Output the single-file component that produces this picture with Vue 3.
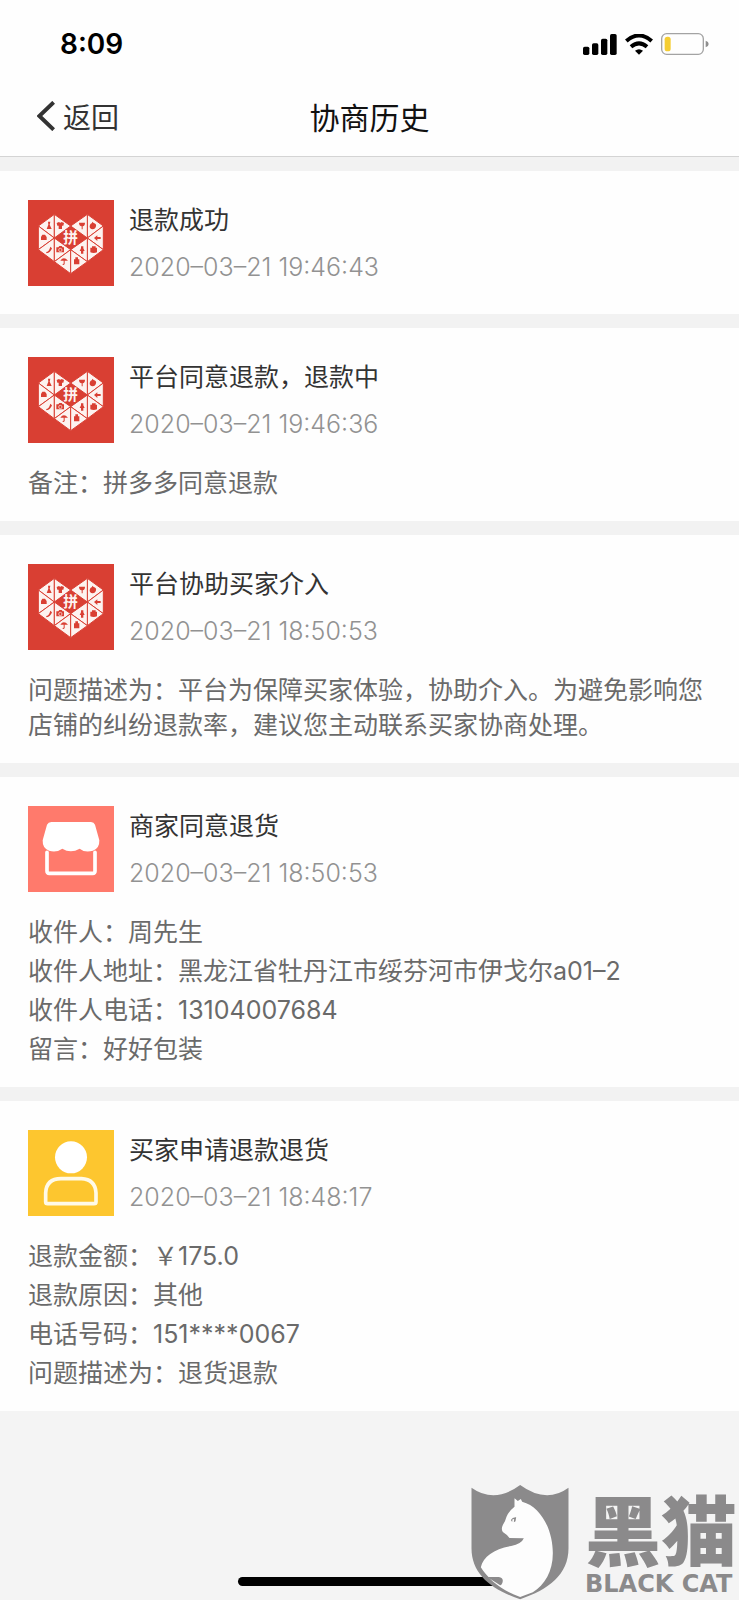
<script setup>
import { ref } from 'vue';

const records = ref([
  {
    id: 1,
    type: 'platform',
    title: '退款成功',
    time: '2020–03–21 19:46:43',
    details: []
  },
  {
    id: 2,
    type: 'platform',
    title: '平台同意退款，退款中',
    time: '2020–03–21 19:46:36',
    details: ['备注：拼多多同意退款']
  },
  {
    id: 3,
    type: 'platform',
    title: '平台协助买家介入',
    time: '2020–03–21 18:50:53',
    details: [
      '问题描述为：平台为保障买家体验，协助介入。为避免影响您店铺的纠纷退款率，建议您主动联系买家协商处理。'
    ]
  },
  {
    id: 4,
    type: 'seller',
    title: '商家同意退货',
    time: '2020–03–21 18:50:53',
    details: [
      '收件人：周先生',
      '收件人地址：黑龙江省牡丹江市绥芬河市伊戈尔a01–2',
      '收件人电话：13104007684',
      '留言：好好包装'
    ]
  },
  {
    id: 5,
    type: 'buyer',
    title: '买家申请退款退货',
    time: '2020–03–21 18:48:17',
    details: [
      '退款金额：￥175.0',
      '退款原因：其他',
      '电话号码：151****0067',
      '问题描述为：退货退款'
    ]
  }
]);

// white triangles that make up the heart
const triangles = [
  '56,107 104,72 104,143',
  '104,72 153,107 104,143',
  '56,107 104,143 56,178',
  '56,178 104,143 104,214',
  '104,143 153,178 104,214',
  '104,214 153,178 153,250',
  '251,107 203,72 203,143',
  '203,72 153,107 203,143',
  '251,107 203,143 251,178',
  '251,178 203,143 203,214',
  '203,143 153,178 203,214',
  '203,214 153,178 153,250'
];
</script>

<template>
  <div class="page">
    <header>
      <div class="status-bar">
        <span class="clock">8:09</span>
        <div class="status-icons">
          <svg class="signal" viewBox="0 0 102 63">
            <rect x="0" y="38" width="19" height="25" rx="5" />
            <rect x="27" y="28" width="19" height="35" rx="5" />
            <rect x="54" y="14" width="19" height="49" rx="5" />
            <rect x="81" y="0" width="20" height="63" rx="5" />
          </svg>
          <svg class="wifi" viewBox="0 0 84 63">
            <path d="M4 21Q42-12 80 21" />
            <path d="M18 38Q42 18 66 38" />
            <path class="dot" d="M30 50Q42 41 54 50L42 62Z" />
          </svg>
          <svg class="battery" viewBox="0 0 144 66">
            <rect class="shell" x="2" y="2" width="125" height="62" rx="15" />
            <rect class="level" x="11" y="11" width="18" height="44" rx="8" />
            <path class="cap" d="M134 23Q143 26 143 33Q143 40 134 43Z" />
          </svg>
        </div>
      </div>
      <nav>
        <button class="back" type="button">
          <svg viewBox="0 0 54 90">
            <path d="M50 4L7 45L50 86" />
          </svg>
          返回
        </button>
        <h1>协商历史</h1>
      </nav>
    </header>

    <main>
      <article v-for="record in records" :key="record.id" class="card">
        <div class="card-head">
          <svg v-if="record.type === 'platform'" class="avatar platform" viewBox="25 29 258 258">
            <polygon v-for="points in triangles" :key="points" :points="points" class="tile" />
            <g class="goods">
              <path d="M85 94h7l-2 9 6 13h-15l5-13z" />
              <path d="M111 98l7-3q4 4 8 0l7 3-2 8h-4v10h-10v-10h-4z" />
              <path d="M64 140l4-7h8l5 7v9H64z" />
              <path d="M79 185q9 0 13-16l5 5q-5 14-16 15z" />
              <path d="M110 171h6l3-4h7l3 4h4v15h-23z" />
              <path d="M122 211q10-14 23 0h-10v10q-4 6-7 0l4-1v-9z" />
              <path d="M163 207h4v-6h8v6h4v15h-16z" />
              <path d="M178 97h18q0 10-7 11v9h-3v-9q-8-1-8-11z" />
              <path d="M218 94l4 4q9 2 7 10-2 9-10 9-10-1-9-10 1-7 7-9z" />
              <path d="M223 143l10-8v5h10v6h-10v6z" />
              <path d="M184 168h7v6l4 8h-4v8h-7v-8h-4l4-8z" />
              <path d="M212 172h5v-4h11v4h4v14q-10 4-20 0z" />
            </g>
            <circle class="lens" cx="122" cy="179" r="5" />
            <text x="153" y="159" text-anchor="middle">拼</text>
          </svg>
          <svg v-else-if="record.type === 'seller'" class="avatar seller" viewBox="25 21 258 258">
            <path
              class="solid"
              d="M95 69H214Q223 69 226 77L239 124Q240 148 220 155Q195 162 180 149Q153 164 128 149Q110 162 88 155Q68 148 69 124L82 77Q86 69 95 69Z"
            />
            <path class="line" d="M82 160V216Q82 223 89 223H219Q226 223 226 216V160" />
          </svg>
          <svg v-else class="avatar buyer" viewBox="25 29 258 258">
            <circle class="solid" cx="154" cy="111" r="48" />
            <path
              class="line"
              d="M84 250Q78 250 78 244V218Q80 175 124 175H185Q227 177 229 218V244Q229 250 223 250Z"
            />
          </svg>
          <div class="summary">
            <h2>{{ record.title }}</h2>
            <time>{{ record.time }}</time>
          </div>
        </div>
        <div v-if="record.details.length" class="details">
          <p v-for="line in record.details" :key="line">{{ line }}</p>
        </div>
      </article>
    </main>

    <div class="home-indicator"></div>

    <div class="watermark">
      <svg viewBox="60 75 293 345">
        <path
          class="shield"
          d="M61 83Q130 132 207 75Q285 132 352 83V265C352 344 292 389 207 418C122 389 61 344 61 265Z"
        />
        <path
          class="cat"
          d="M190 115L200 123L209 117L213 125C270 140 305 210 305 280C305 335 280 375 245 397L207 411C155 393 112 360 89 322C96 290 130 266 180 258Q211 252 218 235L175 234Q168 224 155 216Q149 207 155 195Q162 185 166 170Q174 152 190 140Z"
        />
        <path class="eye" d="M179 180Q184 171 195 172L193 184L188 187L189 177L184 178L183 186Z" />
        <path class="tip" d="M108 351H143Q155 353 155 363Q153 375 147 376Z" />
      </svg>
      <div class="brand">
        <span class="brand-zh">黑猫</span>
        <span class="brand-en">BLACK CAT</span>
      </div>
    </div>
  </div>
</template>

<style>
body {
  margin: 0;
  background-color: #f4f4f4;
}
</style>

<style scoped>
.page {
  position: relative;
  display: flex;
  flex-direction: column;
  min-height: 100vh;
  background-color: #f4f4f4;
  font-family: Inter, 'Noto Sans CJK SC', sans-serif;
}

h1,
h2,
p {
  margin: 0;
  font-weight: normal;
}

header {
  background-color: #fefefe;
  border-bottom: 1px solid #d4d4d4;
}

.status-bar {
  display: flex;
  justify-content: space-between;
  align-items: center;
  box-sizing: border-box;
  height: 80px;
  padding: 8px 30px 0 60px;
}

.clock {
  font-size: 28px;
  font-weight: 600;
  color: #000;
}

.status-icons {
  display: flex;
  align-items: center;
  gap: 8px;
}

.signal {
  width: 34px;
  height: 21px;
}

.wifi {
  width: 28px;
  height: 21px;
}

.wifi path {
  fill: none;
  stroke: #000;
  stroke-width: 12;
}

.wifi .dot {
  fill: #000;
  stroke: none;
}

.battery {
  width: 48px;
  height: 22px;
}

.battery .shell {
  fill: none;
  stroke: #a3a3a3;
  stroke-width: 4;
}

.battery .level {
  fill: #f5cd32;
}

.battery .cap {
  fill: #8e8e8e;
}

nav {
  display: grid;
  grid-template-columns: 1fr auto 1fr;
  align-items: center;
  height: 72px;
  padding: 0 37px 4px;
}

.back {
  display: flex;
  align-items: center;
  justify-self: start;
  gap: 8px;
  padding: 0;
  border: none;
  background: none;
  font-family: inherit;
  font-size: 28px;
  color: #333;
  cursor: pointer;
}

.back svg {
  width: 18px;
  height: 30px;
}

.back path {
  fill: none;
  stroke: #333;
  stroke-width: 12;
}

nav h1 {
  font-size: 30px;
  color: #111;
}

main {
  display: flex;
  flex-direction: column;
  gap: 14px;
  padding-top: 14px;
  background-color: #f2f2f2;
}

.card {
  padding: 29px 28px 28px;
  background-color: #fefefe;
}

.card:has(.details) {
  padding-bottom: 20px;
}

.card-head {
  display: flex;
  gap: 15px;
}

.avatar {
  flex: none;
  width: 86px;
  height: 86px;
}

.platform {
  background-color: #d93f33;
}

.platform .tile {
  fill: #fdf3f0;
  stroke: #d93f33;
  stroke-width: 3;
}

.platform .goods {
  fill: #d93f33;
}

.platform .lens {
  fill: none;
  stroke: #fdf3f0;
  stroke-width: 2;
}

.platform text {
  fill: #fdf3f0;
  font-size: 44px;
  font-weight: bold;
}

.seller {
  background-color: #ff7a6c;
}

.buyer {
  background-color: #fdc62f;
}

.solid {
  fill: #fff;
}

.line {
  fill: none;
  stroke: #fff;
  stroke-width: 11;
  stroke-linecap: round;
}

.buyer .line {
  stroke: #fffae8;
}

.summary {
  display: flex;
  flex-direction: column;
  gap: 12px;
  padding-top: 3px;
}

.summary h2 {
  font-size: 25px;
  line-height: 35px;
  color: #333;
}

.summary time {
  font-size: 25px;
  font-weight: 300;
  line-height: 35px;
  color: #929292;
}

.details {
  display: flex;
  flex-direction: column;
  gap: 4px;
  margin-top: 23px;
}

.details p {
  font-size: 25px;
  line-height: 35px;
  color: #6a6a6a;
}

.home-indicator {
  width: 264px;
  height: 9px;
  margin: auto auto 14px;
  border-radius: 5px;
  background-color: #000;
}

.watermark {
  position: absolute;
  right: 2px;
  bottom: 0;
  display: flex;
  align-items: flex-end;
  gap: 16px;
  color: #8b8a8b;
}

.watermark svg {
  width: 98px;
  height: 115px;
}

.shield,
.eye,
.tip {
  fill: #8b8a8b;
}

.cat {
  fill: #fdfdfd;
}

.brand {
  display: flex;
  flex-direction: column;
  padding-bottom: 4px;
}

.brand-zh {
  font-size: 76px;
  font-weight: 900;
  line-height: 80px;
}

.brand-en {
  font-family: 'DejaVu Sans', sans-serif;
  font-size: 24px;
  font-weight: bold;
  line-height: 24px;
}
</style>
